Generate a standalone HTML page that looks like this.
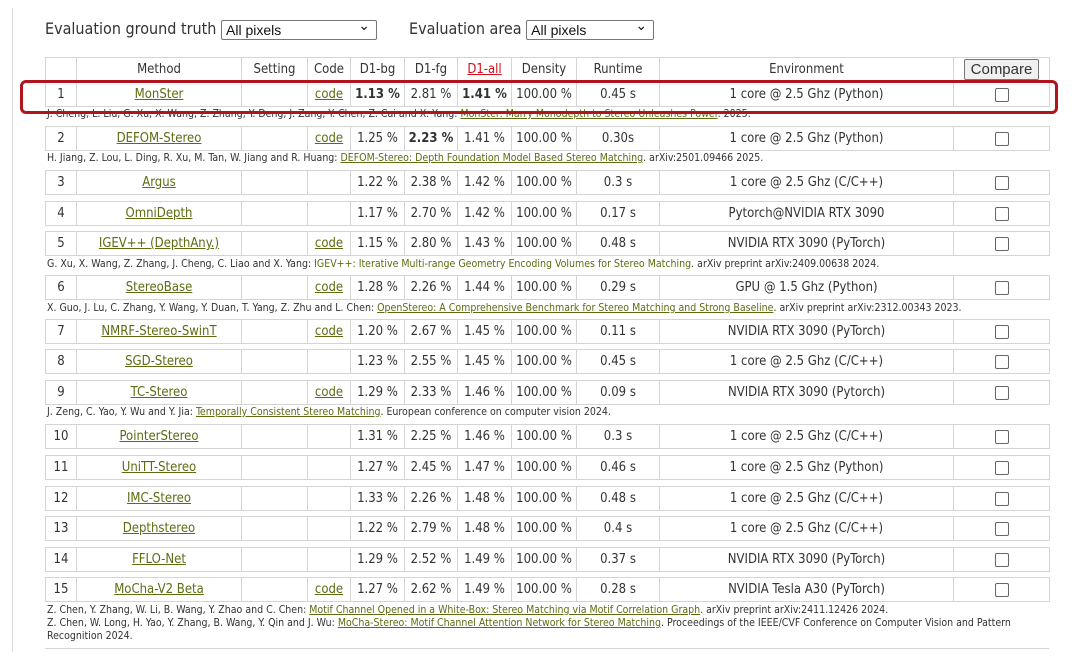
<!DOCTYPE html>
<html><head><meta charset="utf-8"><style>
body{margin:0;width:1080px;height:672px;background:#fff;position:relative;overflow:hidden;font-family:"DejaVu Sans Condensed","Liberation Sans",sans-serif;color:#333;}
.vl{position:absolute;left:12px;top:8px;width:1px;height:644px;background:#ddd}
.top{position:absolute;top:19px;font-size:16px;color:#333;font-family:"DejaVu Sans Condensed","Liberation Sans",sans-serif}
.sel{display:inline-block;border:1px solid #777;border-radius:2px;height:18px;font-family:"Liberation Sans",sans-serif;font-size:14px;line-height:18px;padding-left:4px;position:relative;vertical-align:middle;color:#111}
.sel:after{content:"⌄";position:absolute;right:6px;top:-5px;font-size:14px}
table{position:absolute;left:45px;border-collapse:collapse;font-size:13px;table-layout:fixed;width:1004px}
td{border:1px solid #d4d4d4;height:23px;text-align:center;padding:0;white-space:nowrap;overflow:hidden}
a{color:#5f6b12;text-decoration:underline}
.b{font-weight:bold}
.cb{display:inline-block;width:12px;height:12px;border:1px solid #666;border-radius:2px;vertical-align:middle}
.cite{position:absolute;left:47px;font-size:10.5px;color:#333;white-space:nowrap;font-family:"DejaVu Sans Condensed","Liberation Sans",sans-serif}
.cite a{color:#5f6b12}
.red{position:absolute;left:20px;top:80px;width:1032px;height:28px;border:3px solid #b0151b;border-radius:6px}
</style></head><body>
<div class="vl"></div>
<div class="top" style="left:45px">Evaluation ground truth <span class="sel" style="width:150px">All pixels</span></div>
<div class="top" style="left:409px">Evaluation area <span class="sel" style="width:122px">All pixels</span></div>

<table style="top:57px"><colgroup><col style="width:31px"><col style="width:165px"><col style="width:66px"><col style="width:43px"><col style="width:54px"><col style="width:53px"><col style="width:54px"><col style="width:65px"><col style="width:83px"><col style="width:294px"><col style="width:96px"></colgroup>
<tr><td></td><td>Method</td><td>Setting</td><td>Code</td><td>D1-bg</td><td>D1-fg</td><td><a style="color:#d0101a">D1-all</a></td><td>Density</td><td>Runtime</td><td>Environment</td><td><span style="display:inline-block;border:1px solid #777;background:#f0f0f0;padding:0 6px;font-family:'Liberation Sans',sans-serif;font-size:15px;line-height:19px;border-radius:2px">Compare</span></td></tr></table>

<table style="top:82px"><colgroup><col style="width:31px"><col style="width:165px"><col style="width:66px"><col style="width:43px"><col style="width:54px"><col style="width:53px"><col style="width:54px"><col style="width:65px"><col style="width:83px"><col style="width:294px"><col style="width:96px"></colgroup>
<tr><td>1</td><td><a>MonSter</a></td><td></td><td><a>code</a></td><td class="b">1.13 %</td><td>2.81 %</td><td class="b">1.41 %</td><td>100.00 %</td><td>0.45 s</td><td>1 core @ 2.5 Ghz (Python)</td><td><span class="cb"></span></td></tr></table>
<div class="cite" style="top:108px">J. Cheng, L. Liu, G. Xu, X. Wang, Z. Zhang, Y. Deng, J. Zang, Y. Chen, Z. Cai and X. Yang: <a>MonSter: Marry Monodepth to Stereo Unleashes Power</a>. 2025.</div>
<div class="red"></div>

<table style="top:126px"><colgroup><col style="width:31px"><col style="width:165px"><col style="width:66px"><col style="width:43px"><col style="width:54px"><col style="width:53px"><col style="width:54px"><col style="width:65px"><col style="width:83px"><col style="width:294px"><col style="width:96px"></colgroup>
<tr><td>2</td><td><a>DEFOM-Stereo</a></td><td></td><td><a>code</a></td><td>1.25 %</td><td class="b">2.23 %</td><td>1.41 %</td><td>100.00 %</td><td>0.30s</td><td>1 core @ 2.5 Ghz (Python)</td><td><span class="cb"></span></td></tr></table>
<div class="cite" style="top:152px">H. Jiang, Z. Lou, L. Ding, R. Xu, M. Tan, W. Jiang and R. Huang: <a>DEFOM-Stereo: Depth Foundation Model Based Stereo Matching</a>. arXiv:2501.09466 2025.</div>

<table style="top:170px"><colgroup><col style="width:31px"><col style="width:165px"><col style="width:66px"><col style="width:43px"><col style="width:54px"><col style="width:53px"><col style="width:54px"><col style="width:65px"><col style="width:83px"><col style="width:294px"><col style="width:96px"></colgroup>
<tr><td>3</td><td><a>Argus</a></td><td></td><td></td><td>1.22 %</td><td>2.38 %</td><td>1.42 %</td><td>100.00 %</td><td>0.3 s</td><td>1 core @ 2.5 Ghz (C/C++)</td><td><span class="cb"></span></td></tr></table>

<table style="top:201px"><colgroup><col style="width:31px"><col style="width:165px"><col style="width:66px"><col style="width:43px"><col style="width:54px"><col style="width:53px"><col style="width:54px"><col style="width:65px"><col style="width:83px"><col style="width:294px"><col style="width:96px"></colgroup>
<tr><td>4</td><td><a>OmniDepth</a></td><td></td><td></td><td>1.17 %</td><td>2.70 %</td><td>1.42 %</td><td>100.00 %</td><td>0.17 s</td><td>Pytorch@NVIDIA RTX 3090</td><td><span class="cb"></span></td></tr></table>

<table style="top:231px"><colgroup><col style="width:31px"><col style="width:165px"><col style="width:66px"><col style="width:43px"><col style="width:54px"><col style="width:53px"><col style="width:54px"><col style="width:65px"><col style="width:83px"><col style="width:294px"><col style="width:96px"></colgroup>
<tr><td>5</td><td><a>IGEV++ (DepthAny.)</a></td><td></td><td><a>code</a></td><td>1.15 %</td><td>2.80 %</td><td>1.43 %</td><td>100.00 %</td><td>0.48 s</td><td>NVIDIA RTX 3090 (PyTorch)</td><td><span class="cb"></span></td></tr></table>
<div class="cite" style="top:258px">G. Xu, X. Wang, Z. Zhang, J. Cheng, C. Liao and X. Yang: <span style="color:#5f6b12">IGEV++: Iterative Multi-range Geometry Encoding Volumes for Stereo Matching</span>. arXiv preprint arXiv:2409.00638 2024.</div>

<table style="top:275px"><colgroup><col style="width:31px"><col style="width:165px"><col style="width:66px"><col style="width:43px"><col style="width:54px"><col style="width:53px"><col style="width:54px"><col style="width:65px"><col style="width:83px"><col style="width:294px"><col style="width:96px"></colgroup>
<tr><td>6</td><td><a>StereoBase</a></td><td></td><td><a>code</a></td><td>1.28 %</td><td>2.26 %</td><td>1.44 %</td><td>100.00 %</td><td>0.29 s</td><td>GPU @ 1.5 Ghz (Python)</td><td><span class="cb"></span></td></tr></table>
<div class="cite" style="top:302px">X. Guo, J. Lu, C. Zhang, Y. Wang, Y. Duan, T. Yang, Z. Zhu and L. Chen: <a>OpenStereo: A Comprehensive Benchmark for Stereo Matching and Strong Baseline</a>. arXiv preprint arXiv:2312.00343 2023.</div>

<table style="top:319px"><colgroup><col style="width:31px"><col style="width:165px"><col style="width:66px"><col style="width:43px"><col style="width:54px"><col style="width:53px"><col style="width:54px"><col style="width:65px"><col style="width:83px"><col style="width:294px"><col style="width:96px"></colgroup>
<tr><td>7</td><td><a>NMRF-Stereo-SwinT</a></td><td></td><td><a>code</a></td><td>1.20 %</td><td>2.67 %</td><td>1.45 %</td><td>100.00 %</td><td>0.11 s</td><td>NVIDIA RTX 3090 (PyTorch)</td><td><span class="cb"></span></td></tr></table>

<table style="top:349px"><colgroup><col style="width:31px"><col style="width:165px"><col style="width:66px"><col style="width:43px"><col style="width:54px"><col style="width:53px"><col style="width:54px"><col style="width:65px"><col style="width:83px"><col style="width:294px"><col style="width:96px"></colgroup>
<tr><td>8</td><td><a>SGD-Stereo</a></td><td></td><td></td><td>1.23 %</td><td>2.55 %</td><td>1.45 %</td><td>100.00 %</td><td>0.45 s</td><td>1 core @ 2.5 Ghz (C/C++)</td><td><span class="cb"></span></td></tr></table>

<table style="top:380px"><colgroup><col style="width:31px"><col style="width:165px"><col style="width:66px"><col style="width:43px"><col style="width:54px"><col style="width:53px"><col style="width:54px"><col style="width:65px"><col style="width:83px"><col style="width:294px"><col style="width:96px"></colgroup>
<tr><td>9</td><td><a>TC-Stereo</a></td><td></td><td><a>code</a></td><td>1.29 %</td><td>2.33 %</td><td>1.46 %</td><td>100.00 %</td><td>0.09 s</td><td>NVIDIA RTX 3090 (Pytorch)</td><td><span class="cb"></span></td></tr></table>
<div class="cite" style="top:406px">J. Zeng, C. Yao, Y. Wu and Y. Jia: <a>Temporally Consistent Stereo Matching</a>. European conference on computer vision 2024.</div>

<table style="top:424px"><colgroup><col style="width:31px"><col style="width:165px"><col style="width:66px"><col style="width:43px"><col style="width:54px"><col style="width:53px"><col style="width:54px"><col style="width:65px"><col style="width:83px"><col style="width:294px"><col style="width:96px"></colgroup>
<tr><td>10</td><td><a>PointerStereo</a></td><td></td><td></td><td>1.31 %</td><td>2.25 %</td><td>1.46 %</td><td>100.00 %</td><td>0.3 s</td><td>1 core @ 2.5 Ghz (C/C++)</td><td><span class="cb"></span></td></tr></table>

<table style="top:455px"><colgroup><col style="width:31px"><col style="width:165px"><col style="width:66px"><col style="width:43px"><col style="width:54px"><col style="width:53px"><col style="width:54px"><col style="width:65px"><col style="width:83px"><col style="width:294px"><col style="width:96px"></colgroup>
<tr><td>11</td><td><a>UniTT-Stereo</a></td><td></td><td></td><td>1.27 %</td><td>2.45 %</td><td>1.47 %</td><td>100.00 %</td><td>0.46 s</td><td>1 core @ 2.5 Ghz (Python)</td><td><span class="cb"></span></td></tr></table>

<table style="top:486px"><colgroup><col style="width:31px"><col style="width:165px"><col style="width:66px"><col style="width:43px"><col style="width:54px"><col style="width:53px"><col style="width:54px"><col style="width:65px"><col style="width:83px"><col style="width:294px"><col style="width:96px"></colgroup>
<tr><td>12</td><td><a>IMC-Stereo</a></td><td></td><td></td><td>1.33 %</td><td>2.26 %</td><td>1.48 %</td><td>100.00 %</td><td>0.48 s</td><td>1 core @ 2.5 Ghz (C/C++)</td><td><span class="cb"></span></td></tr></table>

<table style="top:516px"><colgroup><col style="width:31px"><col style="width:165px"><col style="width:66px"><col style="width:43px"><col style="width:54px"><col style="width:53px"><col style="width:54px"><col style="width:65px"><col style="width:83px"><col style="width:294px"><col style="width:96px"></colgroup>
<tr><td>13</td><td><a>Depthstereo</a></td><td></td><td></td><td>1.22 %</td><td>2.79 %</td><td>1.48 %</td><td>100.00 %</td><td>0.4 s</td><td>1 core @ 2.5 Ghz (C/C++)</td><td><span class="cb"></span></td></tr></table>

<table style="top:547px"><colgroup><col style="width:31px"><col style="width:165px"><col style="width:66px"><col style="width:43px"><col style="width:54px"><col style="width:53px"><col style="width:54px"><col style="width:65px"><col style="width:83px"><col style="width:294px"><col style="width:96px"></colgroup>
<tr><td>14</td><td><a>FFLO-Net</a></td><td></td><td></td><td>1.29 %</td><td>2.52 %</td><td>1.49 %</td><td>100.00 %</td><td>0.37 s</td><td>NVIDIA RTX 3090 (PyTorch)</td><td><span class="cb"></span></td></tr></table>

<table style="top:577px"><colgroup><col style="width:31px"><col style="width:165px"><col style="width:66px"><col style="width:43px"><col style="width:54px"><col style="width:53px"><col style="width:54px"><col style="width:65px"><col style="width:83px"><col style="width:294px"><col style="width:96px"></colgroup>
<tr><td>15</td><td><a>MoCha-V2 Beta</a></td><td></td><td><a>code</a></td><td>1.27 %</td><td>2.62 %</td><td>1.49 %</td><td>100.00 %</td><td>0.28 s</td><td>NVIDIA Tesla A30 (PyTorch)</td><td><span class="cb"></span></td></tr></table>
<div class="cite" style="top:604px">Z. Chen, Y. Zhang, W. Li, B. Wang, Y. Zhao and C. Chen: <a>Motif Channel Opened in a White-Box: Stereo Matching via Motif Correlation Graph</a>. arXiv preprint arXiv:2411.12426 2024.</div>
<div class="cite" style="top:617px">Z. Chen, W. Long, H. Yao, Y. Zhang, B. Wang, Y. Qin and J. Wu: <a>MoCha-Stereo: Motif Channel Attention Network for Stereo Matching</a>. Proceedings of the IEEE/CVF Conference on Computer Vision and Pattern</div>
<div class="cite" style="top:630px">Recognition 2024.</div>
<div style="position:absolute;left:45px;top:648px;width:1004px;height:1px;background:#d4d4d4"></div>
</body></html>
